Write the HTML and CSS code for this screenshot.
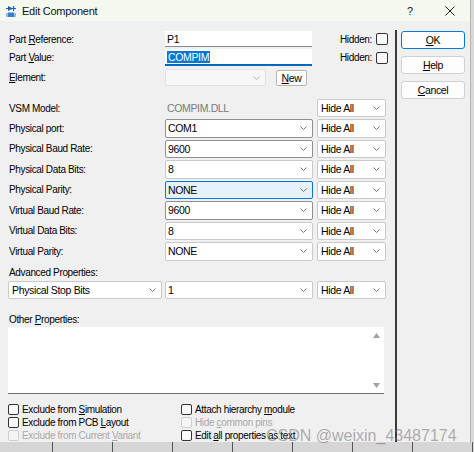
FILE: index.html
```html
<!DOCTYPE html>
<html>
<head>
<meta charset="utf-8">
<link rel="stylesheet" href="styles.css">
</head>
<body>
<div class="screen">
  <div class="window">
    <div class="titlebar">
      <svg class="appicon" width="10" height="13" viewBox="0 0 10 13">
        <path d="M2 1 L7 3.5 L2 6 Z" fill="#1f5fa8"/>
        <rect x="0" y="3" width="10" height="1" fill="#1f5fa8"/>
        <rect x="7" y="1" width="1.2" height="5" fill="#1f5fa8"/>
        <rect x="2" y="7.5" width="6" height="4.5" fill="#3b7fc8"/>
        <rect x="0" y="8.5" width="10" height="1" fill="#3b7fc8"/>
        <rect x="0" y="10.5" width="10" height="1" fill="#3b7fc8"/>
      </svg>
      <span class="title">Edit Component</span>
      <span class="qmark">?</span>
      <svg class="close" width="10" height="10" viewBox="0 0 10 10">
        <path d="M0.5 0.5 L9.5 9.5 M9.5 0.5 L0.5 9.5" stroke="#222" stroke-width="1" fill="none"/>
      </svg>
    </div>
    <div class="body">
      <div class="main">
        <div class="row r1">
          <span class="label">Part <u>R</u>eference:</span>
          <div class="input">P1</div>
          <span class="hidden">Hidden:</span><span class="cb"></span>
        </div>
        <div class="row r2">
          <span class="label">Part <u>V</u>alue:</span>
          <div class="input focus"><span class="sel">COMPIM</span></div>
          <span class="hidden">Hidden:</span><span class="cb"></span>
        </div>
        <div class="row r3">
          <span class="label"><u>E</u>lement:</span>
          <div class="combo elem"><span class="txt"></span><svg class="chev" width="7" height="4" viewBox="0 0 7 4"><polyline points="0.5,0.5 3.5,3.5 6.5,0.5" fill="none" stroke="#b0b0b0" stroke-width="1"/></svg></div>
          <div class="btn small"><span><u>N</u>ew</span></div>
        </div>
        <div class="row prop vsm">
          <span class="label">VSM Model:</span>
          <div class="field static">COMPIM.DLL</div>
          <div class="combo hide"><span class="txt">Hide All</span><svg class="chev" width="7" height="4" viewBox="0 0 7 4"><polyline points="0.5,0.5 3.5,3.5 6.5,0.5" fill="none" stroke="#777" stroke-width="1"/></svg></div>
        </div>
        <div class="row prop">
          <span class="label">Physical port:</span>
          <div class="combo field dark"><span class="txt">COM1</span><svg class="chev" width="7" height="4" viewBox="0 0 7 4"><polyline points="0.5,0.5 3.5,3.5 6.5,0.5" fill="none" stroke="#777" stroke-width="1"/></svg></div>
          <div class="combo hide"><span class="txt">Hide All</span><svg class="chev" width="7" height="4" viewBox="0 0 7 4"><polyline points="0.5,0.5 3.5,3.5 6.5,0.5" fill="none" stroke="#777" stroke-width="1"/></svg></div>
        </div>
        <div class="row prop">
          <span class="label">Physical Baud Rate:</span>
          <div class="combo field dark"><span class="txt">9600</span><svg class="chev" width="7" height="4" viewBox="0 0 7 4"><polyline points="0.5,0.5 3.5,3.5 6.5,0.5" fill="none" stroke="#777" stroke-width="1"/></svg></div>
          <div class="combo hide"><span class="txt">Hide All</span><svg class="chev" width="7" height="4" viewBox="0 0 7 4"><polyline points="0.5,0.5 3.5,3.5 6.5,0.5" fill="none" stroke="#777" stroke-width="1"/></svg></div>
        </div>
        <div class="row prop">
          <span class="label">Physical Data Bits:</span>
          <div class="combo field"><span class="txt">8</span><svg class="chev" width="7" height="4" viewBox="0 0 7 4"><polyline points="0.5,0.5 3.5,3.5 6.5,0.5" fill="none" stroke="#777" stroke-width="1"/></svg></div>
          <div class="combo hide"><span class="txt">Hide All</span><svg class="chev" width="7" height="4" viewBox="0 0 7 4"><polyline points="0.5,0.5 3.5,3.5 6.5,0.5" fill="none" stroke="#777" stroke-width="1"/></svg></div>
        </div>
        <div class="row prop">
          <span class="label">Physical Parity:</span>
          <div class="combo field active"><span class="txt">NONE</span><svg class="chev" width="7" height="4" viewBox="0 0 7 4"><polyline points="0.5,0.5 3.5,3.5 6.5,0.5" fill="none" stroke="#777" stroke-width="1"/></svg></div>
          <div class="combo hide"><span class="txt">Hide All</span><svg class="chev" width="7" height="4" viewBox="0 0 7 4"><polyline points="0.5,0.5 3.5,3.5 6.5,0.5" fill="none" stroke="#777" stroke-width="1"/></svg></div>
        </div>
        <div class="row prop">
          <span class="label">Virtual Baud Rate:</span>
          <div class="combo field dark"><span class="txt">9600</span><svg class="chev" width="7" height="4" viewBox="0 0 7 4"><polyline points="0.5,0.5 3.5,3.5 6.5,0.5" fill="none" stroke="#777" stroke-width="1"/></svg></div>
          <div class="combo hide"><span class="txt">Hide All</span><svg class="chev" width="7" height="4" viewBox="0 0 7 4"><polyline points="0.5,0.5 3.5,3.5 6.5,0.5" fill="none" stroke="#777" stroke-width="1"/></svg></div>
        </div>
        <div class="row prop">
          <span class="label">Virtual Data Bits:</span>
          <div class="combo field"><span class="txt">8</span><svg class="chev" width="7" height="4" viewBox="0 0 7 4"><polyline points="0.5,0.5 3.5,3.5 6.5,0.5" fill="none" stroke="#777" stroke-width="1"/></svg></div>
          <div class="combo hide"><span class="txt">Hide All</span><svg class="chev" width="7" height="4" viewBox="0 0 7 4"><polyline points="0.5,0.5 3.5,3.5 6.5,0.5" fill="none" stroke="#777" stroke-width="1"/></svg></div>
        </div>
        <div class="row prop">
          <span class="label">Virtual Parity:</span>
          <div class="combo field"><span class="txt">NONE</span><svg class="chev" width="7" height="4" viewBox="0 0 7 4"><polyline points="0.5,0.5 3.5,3.5 6.5,0.5" fill="none" stroke="#777" stroke-width="1"/></svg></div>
          <div class="combo hide"><span class="txt">Hide All</span><svg class="chev" width="7" height="4" viewBox="0 0 7 4"><polyline points="0.5,0.5 3.5,3.5 6.5,0.5" fill="none" stroke="#777" stroke-width="1"/></svg></div>
        </div>
        <div class="sublabel adv">Advanced Properties:</div>
        <div class="row prop stop">
          <div class="combo advsel"><span class="txt">Physical Stop Bits</span><svg class="chev" width="7" height="4" viewBox="0 0 7 4"><polyline points="0.5,0.5 3.5,3.5 6.5,0.5" fill="none" stroke="#777" stroke-width="1"/></svg></div>
          <div class="combo field"><span class="txt">1</span><svg class="chev" width="7" height="4" viewBox="0 0 7 4"><polyline points="0.5,0.5 3.5,3.5 6.5,0.5" fill="none" stroke="#777" stroke-width="1"/></svg></div>
          <div class="combo hide"><span class="txt">Hide All</span><svg class="chev" width="7" height="4" viewBox="0 0 7 4"><polyline points="0.5,0.5 3.5,3.5 6.5,0.5" fill="none" stroke="#777" stroke-width="1"/></svg></div>
        </div>
        <div class="sublabel other">Other <u>P</u>roperties:</div>
        <div class="textarea">
          <div class="scroll">
            <svg width="7" height="5" viewBox="0 0 7 5"><path d="M0 5 L3.5 0 L7 5 Z" fill="#a0a0a0"/></svg>
            <svg width="7" height="5" viewBox="0 0 7 5"><path d="M0 0 L3.5 5 L7 0 Z" fill="#a0a0a0"/></svg>
          </div>
        </div>
        <div class="checks">
          <div class="col c1">
            <div class="chk"><span class="cb"></span><span>Exclude from <u>S</u>imulation</span></div>
            <div class="chk"><span class="cb"></span><span>Exclude from PCB <u>L</u>ayout</span></div>
            <div class="chk dis"><span class="cb"></span><span>Exclude from Current <u>V</u>ariant</span></div>
          </div>
          <div class="col">
            <div class="chk"><span class="cb"></span><span>Attach hierarchy <u>m</u>odule</span></div>
            <div class="chk dis"><span class="cb"></span><span>Hide <u>c</u>ommon pins</span></div>
            <div class="chk"><span class="cb"></span><span>Edit <u>a</u>ll properties as text</span></div>
          </div>
        </div>
      </div>
      <div class="sep"></div>
      <div class="side">
        <div class="btn big default"><span><u>O</u>K</span></div>
        <div class="btn big"><span><u>H</u>elp</span></div>
        <div class="btn big"><span><u>C</u>ancel</span></div>
      </div>
    </div>
  </div>
  <div class="ruler"></div>
  <div class="watermark">CSDN @weixin_43487174</div>
</div>
</body>
</html>
```
FILE: styles.css
```css
* { box-sizing: border-box; }
html, body { margin: 0; padding: 0; }
body {
  width: 474px;
  height: 452px;
  overflow: hidden;
  background: #d9d9d9;
  font-family: "Liberation Sans", Arial, sans-serif;
  font-size: 10px;
  letter-spacing: -0.35px;
  color: #000;
}
.screen { position: relative; width: 474px; height: 452px; }
.window {
  width: 471px;
  height: 442px;
  background: #f0f0f0;
  border-right: 1px solid #b4b4b4;
  display: flex;
  flex-direction: column;
}
.titlebar {
  height: 21px;
  background: #f4f8ee;
  display: flex;
  align-items: center;
  padding-left: 6px;
  flex: none;
}
.appicon { flex: none; margin-top: 1px; }
.title {
  margin-left: 6px;
  font-size: 11px;
  letter-spacing: -0.25px;
  color: #111;
}
.qmark {
  margin-left: auto;
  font-size: 11px;
  color: #222;
  letter-spacing: 0;
}
.close { margin-left: 32px; margin-right: 15px; }

.body { flex: 1; display: flex; }
.main {
  width: 395px;
  padding: 10px 8px 0 8px;
  display: flex;
  flex-direction: column;
}
.sep {
  width: 2px;
  background: #3a3a3a;
  margin-top: 9px;
}
.side {
  flex: 1;
  padding: 10px 0 0 4px;
  display: flex;
  flex-direction: column;
  gap: 7px;
}

.row { display: flex; align-items: center; flex: none; }
.label { width: 157px; padding-left: 1px; flex: none; white-space: nowrap; }
.r1 { height: 16px; }
.r2 { height: 17px; margin-top: 2px; }
.r3 { height: 17px; margin-top: 3px; }
.input {
  width: 147px;
  height: 100%;
  background: #fff;
  border-bottom: 1px solid #8a8a8a;
  padding-left: 2px;
  display: flex;
  align-items: center;
  font-size: 10.5px;
}
.input.focus { border-bottom: 2px solid #0067c0; }
.sel { background: #0078d7; color: #fff; padding: 0 1px; line-height: 12px; }
.hidden { margin-left: auto; margin-right: 4px; }
.cb {
  width: 11px;
  height: 11px;
  border: 1px solid #333;
  border-radius: 2px;
  background: #fbfbfb;
  flex: none;
}
.r1 .cb, .r2 .cb { width: 12px; height: 12px; margin-right: -1px; }

.combo {
  height: 100%;
  background: #fff;
  border: 1px solid #c9c9c9;
  border-radius: 2px;
  display: flex;
  align-items: center;
  padding-left: 2px;
  padding-right: 5px;
  flex: none;
  font-size: 10.5px;
}
.combo .txt { flex: 1; white-space: nowrap; }
.combo .chev { flex: none; }
.combo.elem {
  width: 101px;
  background: #f7f7f7;
  border-color: #e0e0e0;
}
.combo.dark { border-color: #8f8f8f; }
.combo.active { background: #e5f1fb; border-color: #0078d7; }
.field { width: 148px; }
.field.static {
  color: #7a7a7a;
  padding-left: 2px;
  font-size: 10.5px;
}
.combo.hide { width: 69px; margin-left: 4px; padding-left: 3px; }
.combo.advsel { width: 154px; padding-left: 3px; margin-right: 3px; }

.btn {
  background: #fdfdfd;
  border: 1px solid #d0d0d0;
  border-radius: 3px;
  display: flex;
  align-items: center;
  justify-content: center;
  flex: none;
  font-size: 10.5px;
}
.btn.small {
  width: 31px;
  height: 16px;
  margin-left: 10px;
  border-color: #b5b5b5;
  border-radius: 2px;
}
.btn.big { width: 64px; height: 18px; }
.btn.default { border-color: #0078d7; }

.prop { height: 18.5px; margin-top: 2px; }
.prop.vsm { height: 18px; margin-top: 13px; }
.prop.stop { margin-top: 2.5px; height: 17.5px; }

.sublabel { height: 13px; line-height: 13px; padding-left: 1px; flex: none; }
.adv { margin-top: 5px; }
.other { margin-top: 14px; }

.textarea {
  width: 376px;
  height: 67px;
  margin-top: 1.5px;
  background: #fff;
  border-bottom: 1px solid #6f6f6f;
  display: flex;
  justify-content: flex-end;
  flex: none;
}
.scroll {
  width: 16px;
  display: flex;
  flex-direction: column;
  justify-content: space-between;
  align-items: center;
  padding: 6px 0 5px 0;
}
.scroll svg { display: block; }

.checks { display: flex; margin-top: 9px; }
.col { display: flex; flex-direction: column; }
.col.c1 { width: 173px; }
.chk {
  height: 13px;
  display: flex;
  align-items: center;
  gap: 3px;
  white-space: nowrap;
}
.chk.dis { color: #a8a8a8; }
.chk.dis .cb { border-color: #d0d0d0; background: #f4f4f4; }

.ruler {
  height: 10px;
  background: #d6d6d6 repeating-linear-gradient(90deg, transparent 0 52px, #555 52px 53px, transparent 53px 60px);
}
.watermark {
  position: absolute;
  left: 266px;
  top: 428px;
  font-size: 16px;
  line-height: 16px;
  letter-spacing: 0;
  color: rgba(110, 110, 110, 0.55);
  white-space: nowrap;
}
```
